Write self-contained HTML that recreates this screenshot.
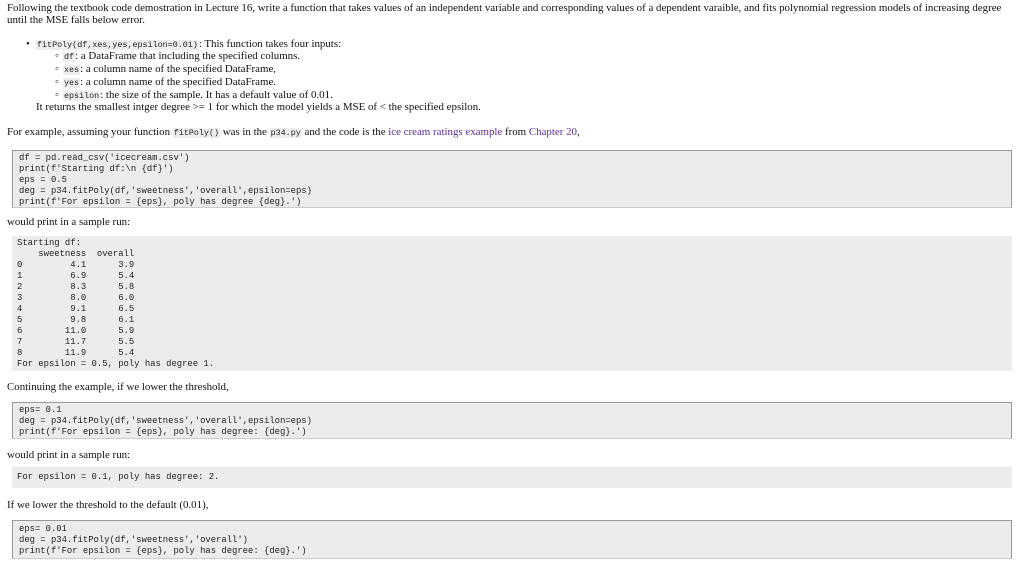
<!DOCTYPE html>
<html><head><meta charset="utf-8"><style>
body{margin:0;width:1024px;height:562px;background:#fff;position:relative;overflow:hidden;font-family:"Liberation Serif",serif;font-size:10.9px;color:#111}
.t{position:absolute;white-space:pre;line-height:12px}
code{font-family:"Liberation Mono",monospace;font-size:8.4px;background:#eee;padding:0 1px;color:#222}
a{color:#5a2d9c;text-decoration:none}
.box{position:absolute;left:12px;width:1000px;background:#ececec;box-sizing:border-box}
.b{border:1px solid #999;border-bottom:1px solid #ccc}
.box pre{margin:0;font-family:"Liberation Mono",monospace;font-size:8.9px;line-height:11px;color:#222;position:absolute;left:6px}
</style></head><body>
<div class="t" style="left:7px;top:2px">Following the textbook code demostration in Lecture 16, write a function that takes values of an independent variable and corresponding values of a dependent varaible, and fits polynomial regression models of increasing degree</div>
<div class="t" style="left:7px;top:14px">until the MSE falls below error.</div>
<div class="t" style="left:26px;top:38px">•</div>
<div class="t" style="left:36px;top:38px"><code>fitPoly(df,xes,yes,epsilon=0.01)</code>: This function takes four inputs:</div>
<div class="t" style="left:55px;top:50px">◦</div><div class="t" style="left:63px;top:50px"><code>df</code>: a DataFrame that including the specified columns.</div>
<div class="t" style="left:55px;top:63px">◦</div><div class="t" style="left:63px;top:63px"><code>xes</code>: a column name of the specified DataFrame,</div>
<div class="t" style="left:55px;top:76px">◦</div><div class="t" style="left:63px;top:76px"><code>yes</code>: a column name of the specified DataFrame.</div>
<div class="t" style="left:55px;top:89px">◦</div><div class="t" style="left:63px;top:89px"><code>epsilon</code>: the size of the sample. It has a default value of 0.01.</div>
<div class="t" style="left:36px;top:101px">It returns the smallest intger degree &gt;= 1 for which the model yields a MSE of &lt; the specified epsilon.</div>
<div class="t" style="left:7px;top:126px">For example, assuming your function <code>fitPoly()</code> was in the <code>p34.py</code> and the code is the <a>ice cream ratings example</a> from <a>Chapter 20</a>,</div>
<div class="box b" style="top:150px;height:58px"><pre style="top:2px">df = pd.read_csv('icecream.csv')
print(f'Starting df:\n {df}')
eps = 0.5
deg = p34.fitPoly(df,'sweetness','overall',epsilon=eps)
print(f'For epsilon = {eps}, poly has degree {deg}.')</pre></div>
<div class="t" style="left:7px;top:216px">would print in a sample run:</div>
<div class="box" style="top:236px;height:135px"><pre style="top:2px;left:5px">Starting df:
    sweetness  overall
0         4.1      3.9
1         6.9      5.4
2         8.3      5.8
3         8.0      6.0
4         9.1      6.5
5         9.8      6.1
6        11.0      5.9
7        11.7      5.5
8        11.9      5.4
For epsilon = 0.5, poly has degree 1.</pre></div>
<div class="t" style="left:7px;top:381px">Continuing the example, if we lower the threshold,</div>
<div class="box b" style="top:402px;height:37px"><pre style="top:2px">eps= 0.1
deg = p34.fitPoly(df,'sweetness','overall',epsilon=eps)
print(f'For epsilon = {eps}, poly has degree: {deg}.')</pre></div>
<div class="t" style="left:7px;top:449px">would print in a sample run:</div>
<div class="box" style="top:467px;height:21px"><pre style="top:5px;left:5px">For epsilon = 0.1, poly has degree: 2.</pre></div>
<div class="t" style="left:7px;top:499px">If we lower the threshold to the default (0.01),</div>
<div class="box b" style="top:520px;height:39px"><pre style="top:3px">eps= 0.01
deg = p34.fitPoly(df,'sweetness','overall')
print(f'For epsilon = {eps}, poly has degree: {deg}.')</pre></div>
</body></html>
